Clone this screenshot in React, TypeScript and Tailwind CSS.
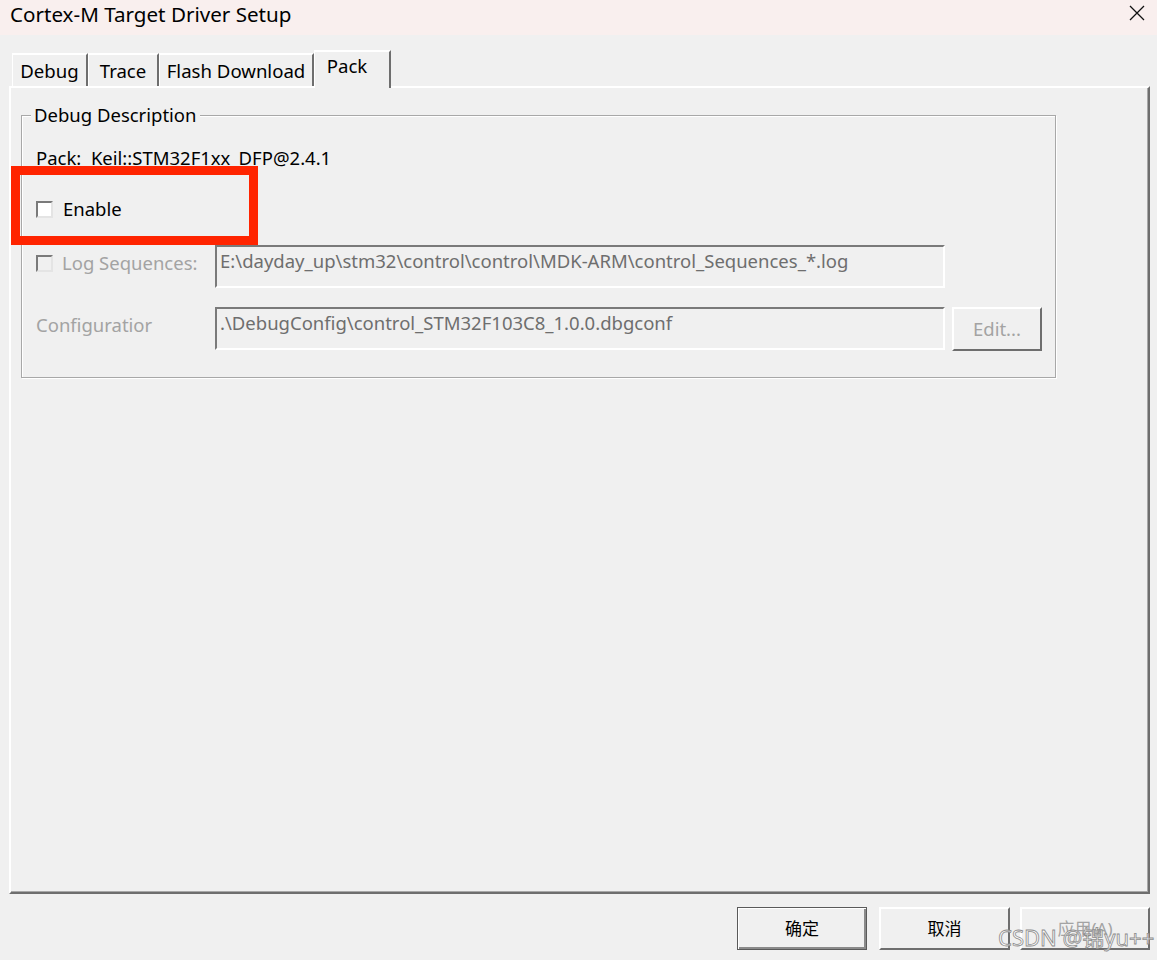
export default function App() {
  return (
    <div className="relative flex h-[960px] w-[1157px] flex-col overflow-hidden bg-[#f0f0f0] font-['Noto_Sans','Noto_Sans_CJK_SC',sans-serif] text-black">
      {/* title bar */}
      <div className="flex h-[35px] items-start justify-between bg-[#f9efee] pl-[10px] pr-[12px] pt-[0px]">
        <span className="text-[20.6px] leading-[28px]">Cortex-M Target Driver Setup</span>
        <svg width="16" height="16" viewBox="0 0 16 16" className="mt-[5px]">
          <path d="M1 1L15 15M15 1L1 15" stroke="#111" strokeWidth="1.3" fill="none" />
        </svg>
      </div>

      {/* tabs */}
      <div className="mt-[15px] flex h-[36px] items-end pl-[12px] text-[18.6px]">
        <Tab label="Debug" w="w-[76px]" />
        <Tab label="Trace" w="w-[71px]" />
        <Tab label="Flash Download" w="w-[155px]" />
        <div className="relative z-10 -mb-[2px] flex h-[38px] w-[77px] items-start justify-center border-r-2 border-t-2 border-l border-t-white border-l-white border-r-[#6e6e6e] bg-[#f0f0f0] pr-[10px] pt-[1px] leading-[26px]">
          Pack
        </div>
      </div>

      {/* panel */}
      <div className="mx-[9px] h-[808px] w-[1141px] border-2 border-l-white border-t-white border-r-[#6e6e6e] border-b-[#6e6e6e] shadow-[inset_-1px_-1px_0_#a8a8a8] pl-[10px] pt-[27px]">
        <div className="relative h-[263px] w-[1035px] border border-[#a8a8a8] shadow-[1px_1px_0_#fff,inset_1px_1px_0_#fff] pl-[14px] pt-[31px] text-[18.5px]">
          <span className="absolute left-[9px] top-[-13px] bg-[#f0f0f0] px-[3px] leading-[24px]">
            Debug Description
          </span>
          <div className="leading-[22px] whitespace-pre">Pack:  Keil::STM32F1xx_DFP@2.4.1</div>

          <div className="mt-[31px] flex h-[18px] items-center gap-[10px]">
            <Check />
            <span className="leading-[22px]">Enable</span>
          </div>

          <div className="mt-[27px] flex items-start">
            <div className="flex w-[179px] items-center gap-[9px] pt-[9px]">
              <Check disabled />
              <span className="leading-[18px] text-[#a3a3a3]">Log Sequences:</span>
            </div>
            <Field text="E:\dayday_up\stm32\control\control\MDK-ARM\control_Sequences_*.log" />
          </div>

          <div className="mt-[19px] flex items-start">
            <div className="w-[179px] pt-[7px] leading-[22px] text-[#a3a3a3]">Configuratior</div>
            <Field text=".\DebugConfig\control_STM32F103C8_1.0.0.dbgconf" />
            <div className="ml-[7px] flex h-[44px] w-[90px] items-center justify-center border-2 border-l-white border-t-white border-r-[#6e6e6e] border-b-[#6e6e6e] text-[#a3a3a3]">
              Edit...
            </div>
          </div>
        </div>
      </div>

      {/* buttons */}
      <div className="mt-[13px] flex justify-end pr-[7px] text-[17px]">
        <div className="flex h-[43px] w-[130px] items-center justify-center border border-[#5a5a5a] shadow-[inset_1px_1px_0_#fff,inset_-2px_-2px_0_#8a8a8a]">
          确定
        </div>
        <div className="ml-[12px] flex h-[43px] w-[131px] items-center justify-center border-2 border-l-white border-t-white border-r-[#6e6e6e] border-b-[#6e6e6e]">
          取消
        </div>
        <div className="ml-[10px] flex h-[43px] w-[130px] items-center justify-center border-2 border-l-white border-t-white border-r-[#6e6e6e] border-b-[#6e6e6e] text-[#a3a3a3]">
          应用(A)
        </div>
      </div>

      {/* annotation + watermark */}
      <div className="absolute left-[11px] top-[166px] h-[79px] w-[247px] border-[9px] border-[#ff2400]" />
      <span className="absolute left-[998px] top-[923px] text-[22px] leading-[28px] text-white/70 [-webkit-text-stroke:0.8px_#8c8c8c]">
        CSDN @锦yu++
      </span>
    </div>
  );
}

function Tab({ label, w }: { label: string; w: string }) {
  return (
    <div className={`flex h-[33px] ${w} items-center justify-center border-r-2 border-t-2 border-l border-t-white border-l-white border-r-[#6e6e6e] leading-[24px]`}>
      {label}
    </div>
  );
}

function Check({ disabled }: { disabled?: boolean }) {
  return (
    <div
      className={`h-[17px] w-[17px] shrink-0 border-2 border-l-[#7a7a7a] border-t-[#7a7a7a] border-r-[#e4e4e4] border-b-[#e4e4e4] ${
        disabled ? "bg-[#f0f0f0]" : "bg-white"
      }`}
    />
  );
}

function Field({ text }: { text: string }) {
  return (
    <div className="h-[43px] w-[730px] border-2 border-l-[#7a7a7a] border-t-[#7a7a7a] border-r-white border-b-white pl-[3px] pt-[3px] leading-[22px] text-[#6e6e6e]">
      {text}
    </div>
  );
}
